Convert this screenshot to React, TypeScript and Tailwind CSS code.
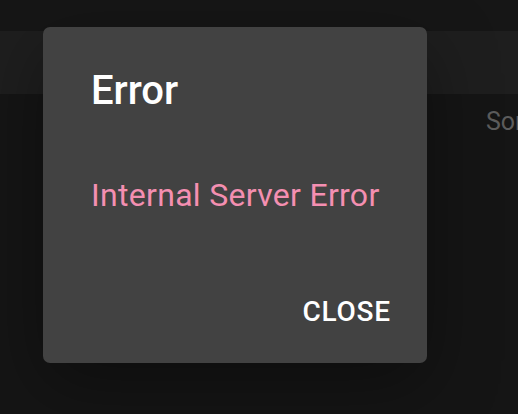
import React from "react";

export default function App() {
  return (
    <div
      className="relative w-[518px] h-[414px] overflow-hidden bg-[#151515]"
      style={{ fontFamily: "Roboto, 'Liberation Sans', sans-serif" }}
    >
      <div className="h-[31px] bg-[#161616]" />
      <div className="h-[63px] bg-[#1e1e1e]" />
      <div className="flex pt-[10px] pl-[486px] overflow-hidden">
        <span className="text-[25px] leading-[36px] text-[#5c5c5c] whitespace-nowrap">
          Sort by
        </span>
      </div>

      <div className="absolute left-[43px] top-[27px] w-[384px] h-[336px] rounded-[7px] bg-[#424242] flex flex-col shadow-[0_22px_70px_rgba(0,0,0,0.35)]">
        <div className="px-[48px] pt-[32px]">
          <h2 className="text-[40px] leading-[64px] font-medium text-white">Error</h2>
        </div>
        <div className="px-[48px] mt-[52px]">
          <p className="text-[32px] leading-[40px] tracking-[0.3px] text-[#f48fb1] whitespace-nowrap">
            Internal Server Error
          </p>
        </div>
        <div className="mt-auto flex justify-end pt-[16px] pb-[15px] pl-[16px] pr-[20px]">
          <button className="h-[72px] px-[16px] text-[28px] font-medium uppercase tracking-[0.8px] text-white rounded-[8px]">
            Close
          </button>
        </div>
      </div>
    </div>
  );
}
